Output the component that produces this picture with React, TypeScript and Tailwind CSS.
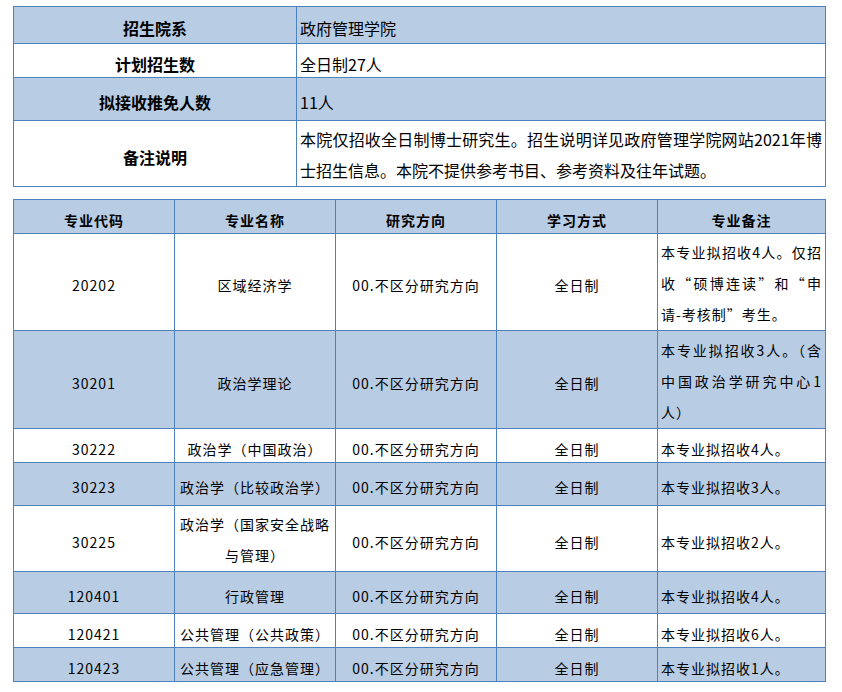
const BORDER = "border border-[#4f81bd]";
// single-line cells sit a little low in the reference; multi-line cells use the taller line box
const ONE = "leading-[24px] pt-[6px] pb-0";
const MULTI = "leading-[31px] pt-[3px] pb-0";

const info = [
  { label: "招生院系", value: "政府管理学院", h: "h-[37px]", blue: true, multi: false },
  { label: "计划招生数", value: "全日制27人", h: "h-[34px]", blue: false, multi: false },
  { label: "拟接收推免人数", value: "11人", h: "h-[43px]", blue: true, multi: false },
  {
    label: "备注说明",
    value:
      "本院仅招收全日制博士研究生。招生说明详见政府管理学院网站2021年博士招生信息。本院不提供参考书目、参考资料及往年试题。",
    h: "h-[66px]",
    blue: false,
    multi: true,
  },
];

const majors = [
  {
    code: "20202",
    name: "区域经济学",
    note: "本专业拟招收4人。仅招收“硕博连读”和“申请-考核制”考生。",
    h: "h-[97px]",
    multiName: false,
    multiNote: true,
  },
  {
    code: "30201",
    name: "政治学理论",
    note: "本专业拟招收3人。（含中国政治学研究中心1人）",
    h: "h-[98px]",
    multiName: false,
    multiNote: true,
  },
  { code: "30222", name: "政治学（中国政治）", note: "本专业拟招收4人。", h: "h-[34px]", multiName: false, multiNote: false },
  { code: "30223", name: "政治学（比较政治学）", note: "本专业拟招收3人。", h: "h-[43px]", multiName: false, multiNote: false },
  { code: "30225", name: "政治学（国家安全战略与管理）", note: "本专业拟招收2人。", h: "h-[66px]", multiName: true, multiNote: false },
  { code: "120401", name: "行政管理", note: "本专业拟招收4人。", h: "h-[42px]", multiName: false, multiNote: false },
  { code: "120421", name: "公共管理（公共政策）", note: "本专业拟招收6人。", h: "h-[34px]", multiName: false, multiNote: false },
  { code: "120423", name: "公共管理（应急管理）", note: "本专业拟招收1人。", h: "h-[34px]", multiName: false, multiNote: false },
];

export default function App() {
  return (
    <div
      lang="zh-CN"
      className="w-[842px] h-[692px] bg-white text-black pt-[6px] pl-[13px] font-['Noto_Sans_CJK_SC',sans-serif]"
    >
      {/* summary table */}
      <table className="w-[812px] table-fixed border-collapse text-[16px]">
        <colgroup>
          <col className="w-[283px]" />
          <col className="w-[529px]" />
        </colgroup>
        <tbody>
          {info.map((r) => (
            <tr key={r.label} className={r.blue ? "bg-[#b8cce4]" : "bg-white"}>
              <td className={`${BORDER} ${r.h} ${ONE} px-0 text-center align-middle font-semibold`}>{r.label}</td>
              <td className={`${BORDER} ${r.h} ${r.multi ? MULTI : ONE} px-[3px] align-middle text-justify`}>
                {r.value}
              </td>
            </tr>
          ))}
        </tbody>
      </table>

      {/* majors table */}
      <table className="mt-[12px] w-[812px] table-fixed border-collapse text-[14px] tracking-[1px]">
        <colgroup>
          <col className="w-[161px]" />
          <col className="w-[161px]" />
          <col className="w-[161px]" />
          <col className="w-[161px]" />
          <col className="w-[168px]" />
        </colgroup>
        <thead>
          <tr className="bg-[#b8cce4]">
            {["专业代码", "专业名称", "研究方向", "学习方式", "专业备注"].map((t) => (
              <th key={t} className={`${BORDER} h-[34px] ${ONE} px-0 text-center align-middle font-bold`}>
                {t}
              </th>
            ))}
          </tr>
        </thead>
        <tbody>
          {majors.map((m, i) => (
            <tr key={m.code} className={i % 2 === 1 ? "bg-[#b8cce4]" : "bg-white"}>
              <td className={`${BORDER} ${m.h} ${ONE} px-0 text-center align-middle`}>{m.code}</td>
              <td className={`${BORDER} ${m.h} ${m.multiName ? MULTI : ONE} px-[3px] text-center align-middle`}>
                {m.name}
              </td>
              <td className={`${BORDER} ${m.h} ${ONE} px-0 text-center align-middle`}>00.不区分研究方向</td>
              <td className={`${BORDER} ${m.h} ${ONE} px-0 text-center align-middle`}>全日制</td>
              <td className={`${BORDER} ${m.h} ${m.multiNote ? MULTI : ONE} px-[3px] align-middle text-justify`}>
                {m.note}
              </td>
            </tr>
          ))}
        </tbody>
      </table>
    </div>
  );
}
